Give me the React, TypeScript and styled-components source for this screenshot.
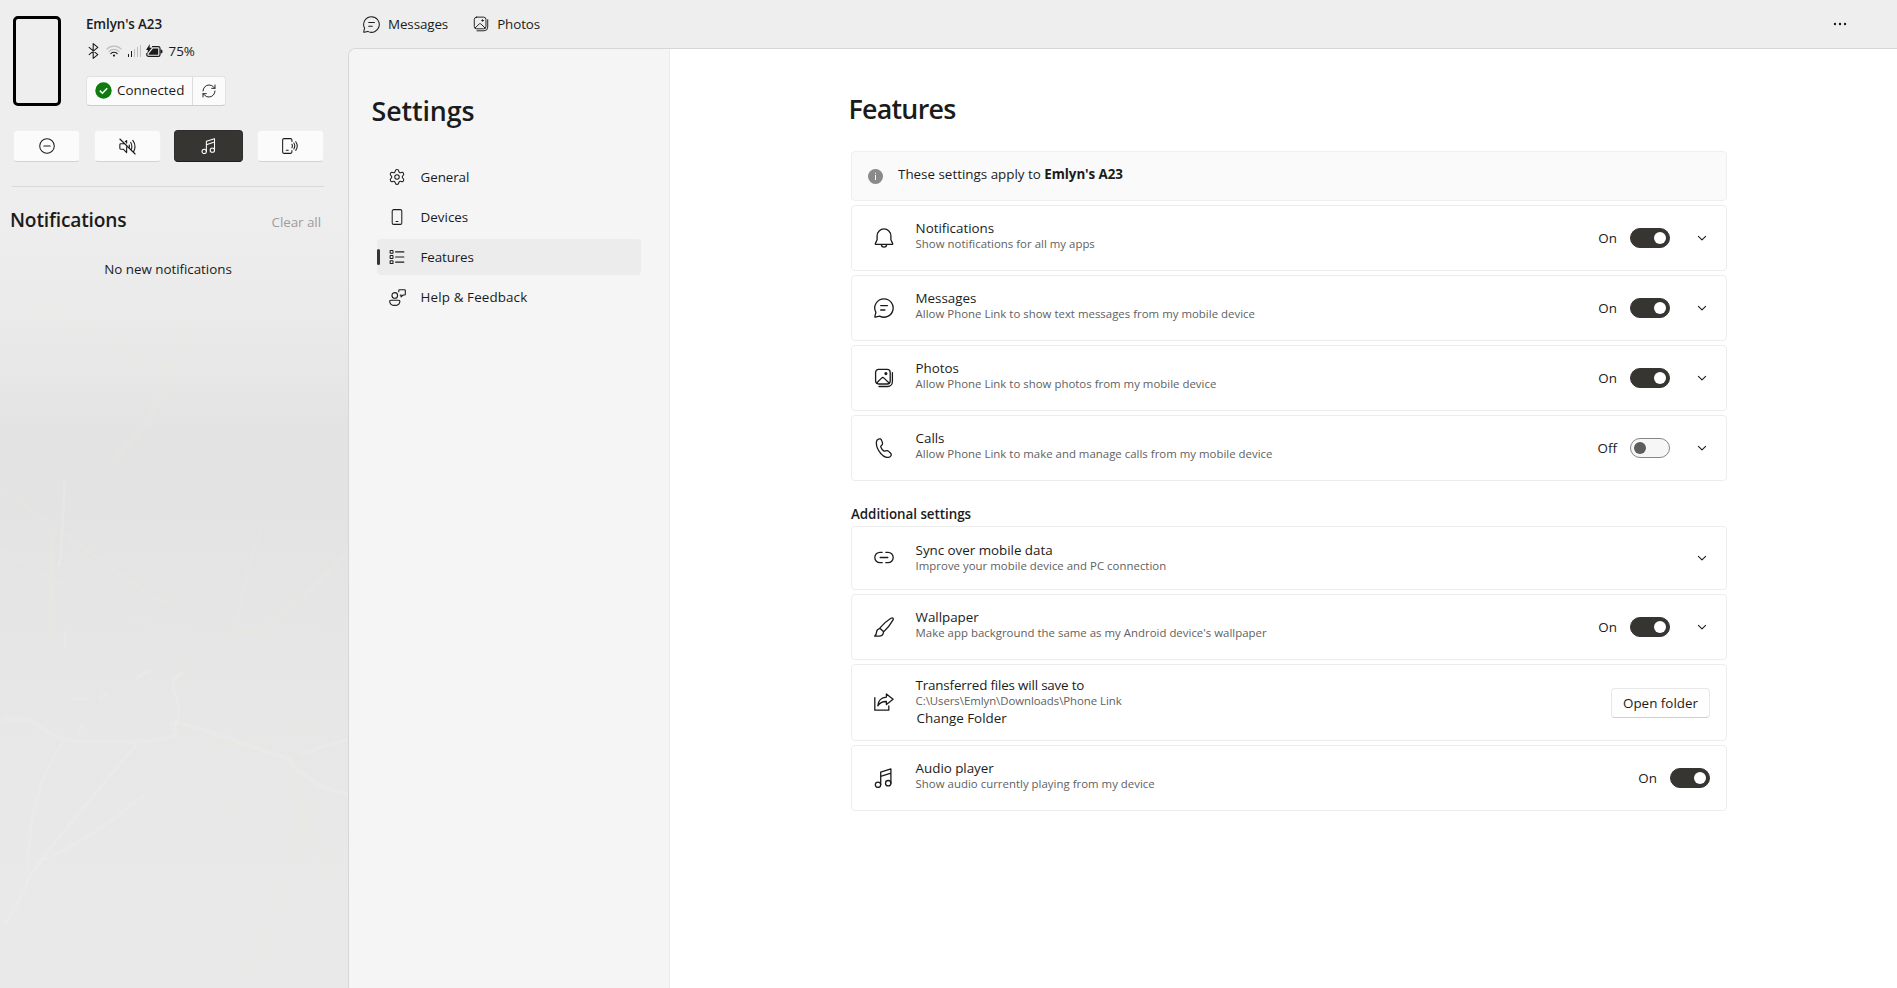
import React from "react";
import styled, { createGlobalStyle } from "styled-components";
import { Settings, RefreshCw } from "lucide-react";

const Global = createGlobalStyle`
  * { box-sizing: border-box; }
  body { margin: 0; overflow: hidden; font-family: "Open Sans", "Noto Sans", sans-serif; font-size: 13.4px; color: #1b1b1b; }
  button { font: inherit; color: inherit; padding: 0; }
`;

const Label = styled.span<{ $size?: number; $weight?: number; $color?: string; $track?: number; $line?: number }>`
  font-size: ${(p) => p.$size ?? 13.4}px;
  font-weight: ${(p) => p.$weight ?? 400};
  color: ${(p) => p.$color ?? "#1b1b1b"};
  letter-spacing: ${(p) => p.$track ?? 0}px;
  line-height: ${(p) => p.$line ?? 20}px;
  white-space: nowrap;
`;

const Shell = styled.div`
  display: grid;
  grid-template-columns: 348px 1fr;
  width: 1897px;
  height: 988px;
  background: #eeeeee;
`;

/* ---------- side bar ---------- */

const Sidebar = styled.aside`
  position: relative;
  height: 988px;
  padding: 16px 24px 0 12px;
  background: linear-gradient(#eeeeee 0, #eeeeee 200px, #ebebeb 300px, #e7e7e7 375px, #e3e3e3 430px, #e3e3e3 510px, #e5e5e5 590px, #e7e7e7 730px, #e9e9e9 900px, #e9e9e9 100%);
`;
const WallpaperArt = styled.svg`
  position: absolute;
  left: 0;
  top: 280px;
`;
const SideContent = styled.div`
  position: relative;
  display: flex;
  flex-direction: column;
`;
const DeviceRow = styled.div`
  display: flex;
  height: 90px;
`;
const DeviceFrame = styled.div`
  width: 48px;
  height: 90px;
  margin-left: 0.5px;
  border: 3px solid #000;
  border-radius: 5px;
`;
const DeviceInfo = styled.div`
  display: flex;
  flex-direction: column;
  margin-left: 25.5px;
  margin-top: -2px;
`;
const StatusRow = styled.div`
  display: flex;
  align-items: center;
  height: 20px;
  margin-top: 7px;
  padding-left: 2px;
  color: #1b1b1b;
  svg { display: block; }
`;
const StatusItem = styled.span<{ $gap: number }>`
  margin-left: ${(p) => p.$gap}px;
`;
const ConnectionBox = styled.div`
  display: flex;
  width: 140px;
  height: 30px;
  margin-top: 15px;
  background: #fbfbfb;
  border: 1px solid #e2e2e2;
  border-bottom-color: #cccccc;
  border-radius: 4px;
`;
const ConnectionState = styled.div`
  display: flex;
  align-items: center;
  gap: 5.5px;
  width: 106px;
  padding: 0 0 2px 7.5px;
  border-right: 1px solid #dcdcdc;
`;
const Refresh = styled.button`
  flex: 1;
  display: grid;
  place-items: center;
  border: 0;
  background: none;
`;
const QuickActions = styled.div`
  display: flex;
  justify-content: space-between;
  width: 311px;
  margin: 24px 0 0 1px;
`;
const QuickButton = styled.button<{ $active?: boolean }>`
  display: grid;
  place-items: center;
  width: ${(p) => (p.$active ? 69 : 67)}px;
  height: 32px;
  border: 1px solid ${(p) => (p.$active ? "#2f2e2c" : "#f0f0f0")};
  border-bottom-color: ${(p) => (p.$active ? "#1d1c1b" : "#d3d3d3")};
  border-radius: 4px;
  background: ${(p) => (p.$active ? "#373532" : "#fbfbfb")};
  color: ${(p) => (p.$active ? "#fff" : "#1b1b1b")};
`;
const Rule = styled.div`
  width: 312px;
  height: 1px;
  margin-top: 24px;
  background: #d9d9d9;
`;
const NotificationHead = styled.div`
  display: flex;
  justify-content: space-between;
  align-items: baseline;
  margin: 19px 3px 0 -2px;
`;
const Empty = styled.div`
  text-align: center;
  margin-top: 25px;
`;

/* ---------- main area ---------- */

const Main = styled.main`
  display: flex;
  flex-direction: column;
`;
const TopBar = styled.header`
  display: flex;
  align-items: center;
  height: 48px;
  padding: 0 49px 0 15px;
`;
const Tab = styled.div`
  display: flex;
  align-items: center;
  gap: 8px;
  margin-right: 25px;
`;
const More = styled.svg`
  margin-left: auto;
`;
const Panel = styled.section`
  flex: 1;
  display: flex;
  border: solid #d6d6d6;
  border-width: 1px 0 0 1px;
  border-radius: 8px 0 0 0;
  overflow: hidden;
  background: #fff;
`;
const SettingsNav = styled.nav`
  width: 321px;
  padding: 43px 28px 0 22.5px;
  background: #f5f5f5;
  border-right: 1px solid #ececec;
`;
const NavList = styled.div`
  margin-top: 29px;
`;
const NavItem = styled.div<{ $selected?: boolean }>`
  display: flex;
  align-items: center;
  width: 264px;
  height: 36px;
  margin: 0 0 4px 5.5px;
  border-radius: 4px;
  background: ${(p) => (p.$selected ? "#ececec" : "transparent")};
  &::before {
    content: "";
    width: 3px;
    height: 16px;
    border-radius: 2px;
    background: ${(p) => (p.$selected ? "#373532" : "transparent")};
  }
`;
const NavIcon = styled.span`
  display: grid;
  place-items: center;
  width: 34px;
  margin-right: 6.6px;
`;
const Content = styled.div`
  width: 876px;
  margin-left: 181px;
  padding-top: 41px;
`;
const Stack = styled.div`
  display: flex;
  flex-direction: column;
  gap: 4px;
`;
const Heading = styled.div`
  margin-left: -2.5px;
  height: 61px;
`;
const InfoCard = styled.div`
  display: flex;
  align-items: center;
  height: 50px;
  padding-left: 16px;
  gap: 15px;
  border: 1px solid #efefef;
  border-radius: 4px;
  background: #fafafa;
`;
const InfoText = styled.div`
  margin-top: -4px;
`;
const Card = styled.div<{ $height: number }>`
  display: flex;
  height: ${(p) => p.$height}px;
  padding: 0 16px 0 22px;
  align-items: center;
  border: 1px solid #ededed;
  border-radius: 4px;
  background: #fff;
`;
const CardText = styled.div<{ $top: number }>`
  align-self: flex-start;
  display: flex;
  flex-direction: column;
  align-items: flex-start;
  flex: 1;
  margin-left: 21.6px;
  padding-top: ${(p) => p.$top}px;
`;
const FolderLink = styled.div`
  margin-left: 1px;
`;
const Subheading = styled.div`
  margin-top: 23px;
  height: 22px;
`;
const Switch = styled.span<{ $on: boolean }>`
  display: flex;
  align-items: center;
  justify-content: ${(p) => (p.$on ? "flex-end" : "flex-start")};
  width: 40px;
  height: 20px;
  margin-left: 13px;
  padding: 0 3px;
  border: 1px solid ${(p) => (p.$on ? "#373532" : "#868686")};
  border-radius: 10px;
  background: ${(p) => (p.$on ? "#373532" : "#f6f6f6")};
  &::after {
    content: "";
    width: 12px;
    height: 12px;
    border-radius: 50%;
    background: ${(p) => (p.$on ? "#fff" : "#5d5d5d")};
  }
`;
const Chevron = styled.svg`
  margin-left: 24px;
`;
const FolderButton = styled.button`
  width: 99px;
  height: 30px;
  border: 1px solid #e8e8e8;
  border-bottom-color: #cfcfcf;
  border-radius: 4px;
  background: #fefefe;
`;

/* ---------- icons ---------- */

type IconProps = { size?: number; sw?: number };
const Glyph = styled.svg`
  display: block;
  flex: none;
`;
const Line = ({ size = 20, sw = 1.3, children }: IconProps & { children: React.ReactNode }) => (
  <Glyph width={size} height={size} viewBox="0 0 20 20" fill="none" stroke="currentColor" strokeWidth={sw} strokeLinecap="round" strokeLinejoin="round">
    {children}
  </Glyph>
);
const MessageIcon = (p: IconProps) => (
  <Line {...p}>
    <path d="M10 .8a9.2 9.2 0 1 1-4.4 17.3L1.3 19.2c-.3.1-.6-.2-.5-.5l1.1-4.3A9.2 9.2 0 0 1 10 .8z" />
    <path d="M6.7 7.6h6.8M6.7 12h4.2" />
  </Line>
);
const PhotosIcon = (p: IconProps) => (
  <Line {...p}>
    <rect x="1.6" y="1.4" width="14.6" height="14.6" rx="3" />
    <path d="M18.4 4.6v9.2a4.7 4.7 0 0 1-4.7 4.7H5M2.6 15l5-4.9c.7-.7 1.7-.7 2.4 0l5.1 4.9" />
    <circle cx="11.9" cy="5.6" r=".9" fill="currentColor" />
  </Line>
);
const BellIcon = (p: IconProps) => (
  <Line {...p}>
    <path d="M10 .9a6.9 6.9 0 0 0-6.9 6.9v4l-1.8 3.8c-.1.4.1.8.6.8h16.2c.5 0 .7-.4.6-.8l-1.8-3.8v-4A6.9 6.9 0 0 0 10 .9zM7.4 16.5a2.6 2.6 0 0 0 5.2 0" />
  </Line>
);
const CallIcon = (p: IconProps) => (
  <Line {...p}>
    <path d="M4.4 1.2C6 .4 7.1.9 7.7 2.6l.7 2c.4 1.2 0 2.2-1.2 3.2-.5.4-.5 1-.2 1.7.6 1.5 1.5 2.6 2.7 3.4.6.4 1.1.3 1.7 0 1.4-.6 2.4-.4 3.3.5l1.9 1.9c1.1 1.1.8 2.5-.6 3.4-2.7 1.6-6.2.2-9.2-3.2C3.8 11.9 2.1 7.7 2.4 4.3 2.5 2.8 3 1.7 4.4 1.2z" />
  </Line>
);
const LinkIcon = (p: IconProps) => (
  <Line {...p}>
    <path d="M8.2 4.3H6a5.2 5.2 0 0 0 0 10.4h2.2M11.8 4.3H14a5.2 5.2 0 0 1 0 10.4h-2.2M6.2 9.5h7.6" />
  </Line>
);
const BrushIcon = (p: IconProps) => (
  <Line {...p}>
    <path d="M16.9 1.3c1.7-1.1 3 .2 2 1.9-2.5 4.4-5.6 8.5-9.2 11.5l-3.9-3.5C8.8 7.4 12.5 4 16.9 1.3zM5.8 11.6c-1.9.2-3 1.5-3.2 3.3-.1 1.9-.7 3.2-1.9 4.2h4.2c3 0 4.8-1.6 4.5-4.5" />
  </Line>
);
const ShareIcon = (p: IconProps) => (
  <Line {...p}>
    <path d="M.8 4.6v12.6h14v-4.2M12.4.9l6.7 5.3-6.7 5.4V8.5C8.5 8.3 5.9 9.6 3.8 12.8 4.1 8 7.3 4.4 12.4 4.1z" />
  </Line>
);
const MusicIcon = (p: IconProps) => (
  <Line {...p}>
    <circle cx="4" cy="16.8" r="2.7" />
    <circle cx="14.2" cy="15.2" r="2.7" />
    <path d="M6.7 16.8V4.2L16.9.9v14.3M6.7 8.4l10.2-3.3" />
  </Line>
);
const PhoneIcon = (p: IconProps) => (
  <Line {...p}>
    <rect x="4" y=".8" width="12" height="18.4" rx="1.8" />
    <path d="M8.8 15.6h2.4" />
  </Line>
);
const ListIcon = (p: IconProps) => (
  <Line {...p}>
    <rect x="1.4" y="1.8" width="3.6" height="3.6" rx=".4" />
    <rect x="1.4" y="8.2" width="3.6" height="3.6" rx=".4" />
    <rect x="1.4" y="14.6" width="3.6" height="3.6" rx=".4" />
    <path d="M8.2 3.6h10.4M8.2 10h10.4M8.2 16.4h10.4" />
  </Line>
);
const FeedbackIcon = (p: IconProps) => (
  <Line {...p}>
    <circle cx="6.8" cy="7.6" r="3.3" />
    <path d="M2 13.2h9.6c.7 0 1.2.5 1.2 1.2 0 3-2.2 4.9-6 4.9s-6-1.9-6-4.9c0-.7.5-1.2 1.2-1.2zM11.5 3.2V1.9c0-.6.4-1 1-1h5.7c.6 0 1 .4 1 1v4.2c0 .6-.4 1-1 1h-1.5l-2.5 2.2V7.1h-1" />
  </Line>
);
const BlockIcon = (p: IconProps) => (
  <Line {...p}>
    <circle cx="10" cy="10" r="9.1" />
    <path d="M6 10h8" />
  </Line>
);
const MuteIcon = (p: IconProps) => (
  <Line {...p}>
    <path d="M1 1.2l18 17.6M5.5 6.8H2c-.6 0-1 .4-1 1v4.4c0 .6.4 1 1 1h3l4 4V10.5M9 6V3L7.4 4.4M12 8.2c.4 1.2.4 2.4 0 3.6M13.8 5.2c1.5 2.5 1.7 5.6.7 8.3M16.2 2.8c3 4 3.3 9 1 13.3" />
  </Line>
);
const RingPhoneIcon = (p: IconProps) => (
  <Line {...p}>
    <path d="M12.4 4.5V2.4c0-.9-.7-1.6-1.6-1.6H2.4C1.5.8.8 1.5.8 2.4v15.2c0 .9.7 1.6 1.6 1.6h8.4c.9 0 1.6-.7 1.6-1.6v-2.1M5.4 15.4h2.4M12.4 7.9c.8 1.4.8 2.9 0 4.3M14.8 6.3c1.5 2.4 1.5 5.1 0 7.5M17.2 4.6c2.5 3.6 2.5 7.3 0 10.9" />
  </Line>
);
const BluetoothIcon = () => (
  <svg width="11" height="16" viewBox="0 0 11 16" fill="none" stroke="currentColor" strokeWidth="1.1" strokeLinejoin="round">
    <path d="M.8 4.2l9 7.4-4.6 3.8V.6l4.6 3.8-9 7.4" />
  </svg>
);
const WifiIcon = () => (
  <svg width="16" height="12" viewBox="0 0 16 12" fill="none" strokeWidth="1.1" strokeLinecap="round">
    <path d="M.8 4.2a10 10 0 0 1 14.4 0M2.9 6.6a7 7 0 0 1 10.2 0" stroke="#bdbdbd" />
    <path d="M4.8 8.6a4.6 4.6 0 0 1 6.4 0" stroke="#1b1b1b" />
    <circle cx="8" cy="10.6" r="1.1" fill="#1b1b1b" />
  </svg>
);
const SignalIcon = () => (
  <svg width="14" height="12" viewBox="0 0 14 12">
    <path d="M0 9h1v3H0zM3 6h1v6H3z" fill="#1b1b1b" />
    <path d="M6 4h1v8H6zM9 2h1v10H9zM12 0h1v12h-1z" fill="#bdbdbd" />
  </svg>
);
const BatteryIcon = () => (
  <svg width="17" height="14" viewBox="0 0 17 14" fill="none">
    <path d="M6 2.6h6.3c1 0 1.7.7 1.7 1.7v6.4c0 1-.7 1.7-1.7 1.7H2.5c-1 0-1.7-.7-1.7-1.7V9" stroke="#1b1b1b" strokeWidth="1.2" />
    <path d="M7 4.4h5.2v6.3H2.7V9.8zM14.5 5.5h.8l1.2 1v2l-1.2 1h-.8zM3.8 0L0 5.9h2L1.2 9.8 6 3.8H3.6z" fill="#1b1b1b" />
  </svg>
);
const CheckIcon = () => (
  <svg width="17" height="17" viewBox="0 0 17 17">
    <circle cx="8.5" cy="8.5" r="8.2" fill="#0f7b0f" />
    <path d="M4.8 8.6l2.6 2.6 4.8-4.9" fill="none" stroke="#fff" strokeWidth="1.5" />
  </svg>
);
const InfoIcon = () => (
  <svg width="15" height="15" viewBox="0 0 15 15">
    <circle cx="7.5" cy="7.5" r="7.5" fill="#8a8a8a" />
    <path d="M7 6h1v5H7zM7 3.7h1v1.1H7z" fill="#fff" />
  </svg>
);
const Expand = () => (
  <Chevron width="16" height="16" viewBox="0 0 16 16" fill="none" stroke="#1b1b1b" strokeWidth="1.1" strokeLinecap="round" strokeLinejoin="round">
    <path d="M4.4 6.4L8 9.8l3.6-3.4" />
  </Chevron>
);

/* Faint marbling behind the lower half of the side bar */
const Marbling = () => (
  <WallpaperArt width="348" height="708" viewBox="0 -600 1044 2124" fill="none" strokeLinecap="round">
    <g stroke="#eeeddd" strokeOpacity=".15">
      <path d="M580-560Q560-450 540-410T490-275 340-58" strokeWidth="20" />
      <path d="M100-520Q230-470 330-424T430-350 520-356" strokeWidth="20" />
      <path d="M0 20Q120 110 190 160T400 310 490 340" strokeWidth="14" />
      <path d="M0 205Q170 310 260 355T480 440 740 458 970 458" strokeWidth="12" />
      <path d="M155 150V500" strokeWidth="20" />
      <path d="M785 130Q745 260 725 360T695 485" strokeWidth="12" />
      <path d="M705 462Q830 430 900 360T1044 215" strokeWidth="18" />
      <path d="M570 515Q560 580 535 610" strokeWidth="18" />
      <path d="M530 748Q620 770 700 790T800 800" strokeWidth="22" />
      <path d="M130 1110Q240 1080 340 1040T560 1000 740 955 1044 1000" strokeWidth="14" />
      <path d="M300 960Q390 910 460 900T580 840 900 740" strokeWidth="12" />
      <path d="M920 700Q905 800 905 960T850 1200Q815 1330 740 1500" strokeWidth="26" />
      <path d="M900 1000Q950 1100 985 1170" strokeWidth="28" />
    </g>
    <g stroke="#f3f3f5" strokeOpacity=".2">
      <path d="M0 728Q60 700 110 735T200 780 400 785 520 742 700 780 860 835Q930 920 1044 945" strokeWidth="13" />
      <path d="M1044 778Q960 800 900 825" strokeWidth="10" />
      <path d="M528 735Q545 680 525 640T545 580" strokeWidth="9" />
      <path d="M190 785Q120 890 100 1000T85 1170" strokeWidth="9" />
      <path d="M410 790Q320 900 240 995T90 1185Q60 1270 15 1330" strokeWidth="9" />
      <path d="M130 1140Q260 1080 350 1010T440 940" strokeWidth="7" />
      <path d="M195 0Q190 80 185 180T175 250M195 455V495" strokeWidth="9" />
      <path d="M215 658H265M300 655L320 638M412 595Q430 575 450 572M235 755L250 735" strokeWidth="9" />
    </g>
  </WallpaperArt>
);

/* ---------- data ---------- */

type Feature = { icon: React.ReactNode; title: string; detail: string; on?: boolean; height?: number; top?: number; track?: number; expand?: boolean };

const features: Feature[] = [
  { icon: <BellIcon />, title: "Notifications", detail: "Show notifications for all my apps", on: true, expand: true },
  { icon: <MessageIcon />, title: "Messages", detail: "Allow Phone Link to show text messages from my mobile device", on: true, expand: true },
  { icon: <PhotosIcon />, title: "Photos", detail: "Allow Phone Link to show photos from my mobile device", on: true, expand: true },
  { icon: <CallIcon />, title: "Calls", detail: "Allow Phone Link to make and manage calls from my mobile device", on: false, expand: true },
];
const additional: Feature[] = [
  { icon: <LinkIcon />, title: "Sync over mobile data", detail: "Improve your mobile device and PC connection", height: 64, top: 14, expand: true },
  { icon: <BrushIcon />, title: "Wallpaper", detail: "Make app background the same as my Android device's wallpaper", on: true, expand: true },
];

const Detail = ({ children, track = 0.02 }: { children: React.ReactNode; track?: number }) => (
  <Label $size={11.4} $line={14} $color="#616161" $track={track}>{children}</Label>
);

const FeatureCard = ({ f }: { f: Feature }) => (
  <Card $height={f.height ?? 66}>
    {f.icon}
    <CardText $top={f.top ?? 13}>
      <Label $line={18} $track={f.track ?? -0.03}>{f.title}</Label>
      <Detail>{f.detail}</Detail>
    </CardText>
    {f.on !== undefined && (
      <>
        <Label>{f.on ? "On" : "Off"}</Label>
        <Switch $on={f.on} />
      </>
    )}
    {f.expand && <Expand />}
  </Card>
);

export default function App() {
  return (
    <>
      <Global />
      <Shell>
        <Sidebar>
          <Marbling />
          <SideContent>
            <DeviceRow>
              <DeviceFrame />
              <DeviceInfo>
                <Label $weight={600} $track={-0.1}>Emlyn's A23</Label>
                <StatusRow>
                  <BluetoothIcon />
                  <StatusItem $gap={7}><WifiIcon /></StatusItem>
                  <StatusItem $gap={6}><SignalIcon /></StatusItem>
                  <StatusItem $gap={4}><BatteryIcon /></StatusItem>
                  <StatusItem $gap={5.5}><Label>75%</Label></StatusItem>
                </StatusRow>
                <ConnectionBox>
                  <ConnectionState>
                    <CheckIcon />
                    <Label>Connected</Label>
                  </ConnectionState>
                  <Refresh><RefreshCw size={16} strokeWidth={1.4} /></Refresh>
                </ConnectionBox>
              </DeviceInfo>
            </DeviceRow>
            <QuickActions>
              <QuickButton><BlockIcon size={16} /></QuickButton>
              <QuickButton><MuteIcon size={17} /></QuickButton>
              <QuickButton $active><MusicIcon size={16} /></QuickButton>
              <QuickButton><RingPhoneIcon size={16} /></QuickButton>
            </QuickActions>
            <Rule />
            <NotificationHead>
              <Label $size={19.2} $weight={600} $line={28} $track={-0.18}>Notifications</Label>
              <Label $color="#9d9d9d" $track={-0.05}>Clear all</Label>
            </NotificationHead>
            <Empty><Label $track={-0.03}>No new notifications</Label></Empty>
          </SideContent>
        </Sidebar>
        <Main>
          <TopBar>
            <Tab><MessageIcon size={17} sw={1.2} /><Label $track={-0.1}>Messages</Label></Tab>
            <Tab><PhotosIcon size={16} sw={1.2} /><Label $track={-0.1}>Photos</Label></Tab>
            <More width="16" height="4" viewBox="0 0 16 4" fill="#1b1b1b">
              <circle cx="3" cy="2" r="1.2" /><circle cx="8" cy="2" r="1.2" /><circle cx="13" cy="2" r="1.2" />
            </More>
          </TopBar>
          <Panel>
            <SettingsNav>
              <Label as="div" $size={26.8} $weight={600} $line={38} $track={-0.1}>Settings</Label>
              <NavList>
                <NavItem><NavIcon><Settings size={18} strokeWidth={1.4} /></NavIcon><Label $track={-0.1}>General</Label></NavItem>
                <NavItem><NavIcon><PhoneIcon size={16} /></NavIcon><Label>Devices</Label></NavItem>
                <NavItem $selected><NavIcon><ListIcon size={16} /></NavIcon><Label $track={-0.15}>Features</Label></NavItem>
                <NavItem><NavIcon><FeedbackIcon size={17} /></NavIcon><Label $track={0.12}>Help &amp; Feedback</Label></NavItem>
              </NavList>
            </SettingsNav>
            <Content>
              <Heading><Label $size={26.8} $weight={600} $line={38} $track={-0.75}>Features</Label></Heading>
              <Stack>
                <InfoCard>
                  <InfoIcon />
                  <InfoText>
                    <Label>These settings apply to </Label>
                    <Label $weight={700} $track={-0.08}>Emlyn's A23</Label>
                  </InfoText>
                </InfoCard>
                {features.map((f) => <FeatureCard key={f.title} f={f} />)}
              </Stack>
              <Subheading><Label $weight={600} $track={-0.05}>Additional settings</Label></Subheading>
              <Stack>
                {additional.map((f) => <FeatureCard key={f.title} f={f} />)}
                <Card $height={77}>
                  <ShareIcon />
                  <CardText $top={11}>
                    <Label $line={18} $track={-0.18}>Transferred files will save to</Label>
                    <Detail track={-0.05}>C:\Users\Emlyn\Downloads\Phone Link</Detail>
                    <FolderLink><Label $line={21}>Change Folder</Label></FolderLink>
                  </CardText>
                  <FolderButton><Label>Open folder</Label></FolderButton>
                </Card>
                <FeatureCard f={{ icon: <MusicIcon />, title: "Audio player", detail: "Show audio currently playing from my device", on: true }} />
              </Stack>
            </Content>
          </Panel>
        </Main>
      </Shell>
    </>
  );
}
